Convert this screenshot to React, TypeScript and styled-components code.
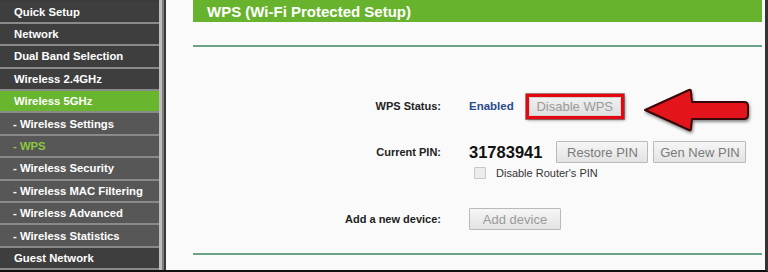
import React from "react";
import styled, { createGlobalStyle } from "styled-components";

const GlobalStyle = createGlobalStyle`
  html, body {
    margin: 0;
    padding: 0;
    background: #fafafa;
    overflow: hidden;
  }
  body {
    font-family: "Liberation Sans", Arial, sans-serif;
  }
`;

const Frame = styled.div`
  display: flex;
  width: 768px;
  height: 272px;
  box-sizing: border-box;
  border-bottom: 2px solid #111;
  border-right: 3px solid #333;
  background: #fafafa;
  overflow: hidden;
`;

const Sidebar = styled.nav`
  width: 159px;
  flex-shrink: 0;
  display: flex;
  flex-direction: column;
  padding-top: 1.5px;
  background: #3b3b3b;
`;

const MenuItem = styled.div<{ $sub?: boolean; $active?: boolean; $current?: boolean }>`
  height: 20.4px;
  flex-shrink: 0;
  border-bottom: 2px solid #8a8a8a;
  display: flex;
  align-items: center;
  padding-left: ${(p) => (p.$sub ? 13 : 14)}px;
  font-size: 11.3px;
  font-weight: bold;
  color: ${(p) => (p.$current ? "#8dc63f" : "#ffffff")};
  background: ${(p) => (p.$active ? "#68b52e" : p.$sub ? "#575757" : "#3e3e3e")};
  white-space: nowrap;
`;

const Divider = styled.div`
  width: 7px;
  flex-shrink: 0;
  display: flex;
`;

const DividerLight = styled.div`
  width: 3px;
  background: #bdbdbd;
`;

const DividerMid = styled.div`
  width: 2px;
  background: #7d7d7d;
`;

const DividerDark = styled.div`
  width: 2px;
  background: #3a3a3a;
`;

const Content = styled.main`
  position: relative;
  flex: 1;
  padding: 0 3px 0 27px;
  display: flex;
  flex-direction: column;
  background: #fafafa;
`;

const Header = styled.div`
  height: 22px;
  background: #68b32d;
  color: #fff;
  font-size: 15px;
  font-weight: bold;
  display: flex;
  align-items: center;
  padding-left: 14px;
`;

const Rule = styled.div<{ $gap: number }>`
  margin-top: ${(p) => p.$gap}px;
  height: 2px;
  background: #6ba487;
`;

const Row = styled.div<{ $gap: number; $height: number }>`
  margin-top: ${(p) => p.$gap}px;
  height: ${(p) => p.$height}px;
  display: grid;
  grid-template-columns: 248px auto;
  column-gap: 28px;
  align-items: center;
`;

const Label = styled.div`
  text-align: right;
  font-size: 11px;
  font-weight: bold;
  color: #222;
`;

const Value = styled.div`
  display: flex;
  align-items: center;
`;

const Status = styled.span`
  font-size: 11.5px;
  font-weight: bold;
  color: #2b4a8d;
  margin-right: 12px;
`;

const Pin = styled.span`
  font-size: 16.5px;
  font-weight: bold;
  color: #111;
  margin-right: 14px;
`;

const Highlight = styled.div`
  border: 3px solid #e4070f;
  box-shadow: 0 0 0 1px rgba(90, 0, 0, 0.45), 1px 1px 3px rgba(0, 0, 0, 0.5);
  display: flex;
`;

const Button = styled.button<{ $width: number; $muted?: boolean }>`
  width: ${(p) => p.$width}px;
  height: 22px;
  padding: 0;
  margin-right: 5px;
  font-family: "Liberation Sans", Arial, sans-serif;
  font-size: 13px;
  color: ${(p) => (p.$muted ? "#9a9a9a" : "#7a7a7a")};
  background: linear-gradient(#f6f6f6, #e3e3e3);
  border: 1px solid #b9b9b9;
  border-radius: 1px;
  ${Highlight} & {
    margin: 0;
    height: 19px;
    border-color: #d0d0d0;
    background: linear-gradient(#f0f0f0, #e0e0e0);
  }
`;

const CheckRow = styled.label`
  display: flex;
  align-items: center;
  padding-left: 5px;
  font-size: 11px;
  color: #333;
`;

const CheckBox = styled.span`
  width: 10px;
  height: 10px;
  border: 1px solid #c8c8c8;
  background: #ececec;
  border-radius: 1px;
  margin-right: 10px;
`;

const Arrow = styled.svg`
  position: absolute;
  left: 476px;
  top: 84px;
  filter: drop-shadow(1px 2px 1.5px rgba(0, 0, 0, 0.45));
`;

const menu = [
  { label: "Quick Setup" },
  { label: "Network" },
  { label: "Dual Band Selection" },
  { label: "Wireless 2.4GHz" },
  { label: "Wireless 5GHz", active: true },
  { label: "- Wireless Settings", sub: true },
  { label: "- WPS", sub: true, current: true },
  { label: "- Wireless Security", sub: true },
  { label: "- Wireless MAC Filtering", sub: true },
  { label: "- Wireless Advanced", sub: true },
  { label: "- Wireless Statistics", sub: true },
  { label: "Guest Network" },
];

export default function App() {
  return (
    <>
      <GlobalStyle />
      <Frame>
        <Sidebar>
          {menu.map((m) => (
            <MenuItem key={m.label} $sub={m.sub} $active={m.active} $current={m.current}>
              {m.label}
            </MenuItem>
          ))}
        </Sidebar>
        <Divider>
          <DividerLight />
          <DividerMid />
          <DividerDark />
        </Divider>
        <Content>
          <Header>WPS (Wi-Fi Protected Setup)</Header>
          <Rule $gap={23} />
          <Row $gap={46} $height={26}>
            <Label>WPS Status:</Label>
            <Value>
              <Status>Enabled</Status>
              <Highlight>
                <Button $width={92} $muted>
                  Disable WPS
                </Button>
              </Highlight>
            </Value>
          </Row>
          <Row $gap={22} $height={22}>
            <Label>Current PIN:</Label>
            <Value>
              <Pin>31783941</Pin>
              <Button $width={92}>Restore PIN</Button>
              <Button $width={93}>Gen New PIN</Button>
            </Value>
          </Row>
          <Row $gap={3} $height={14}>
            <span />
            <CheckRow>
              <CheckBox />
              Disable Router's PIN
            </CheckRow>
          </Row>
          <Row $gap={28} $height={22}>
            <Label>Add a new device:</Label>
            <Value>
              <Button $width={92} $muted>
                Add device
              </Button>
            </Value>
          </Row>
          <Rule $gap={23} />
          <Arrow width="110" height="52" viewBox="0 0 110 52">
            <path
              d="M3,26 L47,6 Q49,5 49,8 L50,18 L102,18 Q106,18 106,22 L106,31 Q106,35 102,35 L50,35 L49,44 Q49,47 47,46 Z"
              fill="#e3141b"
              stroke="#3a0808"
              strokeWidth="2"
              strokeLinejoin="round"
            />
          </Arrow>
        </Content>
      </Frame>
    </>
  );
}
